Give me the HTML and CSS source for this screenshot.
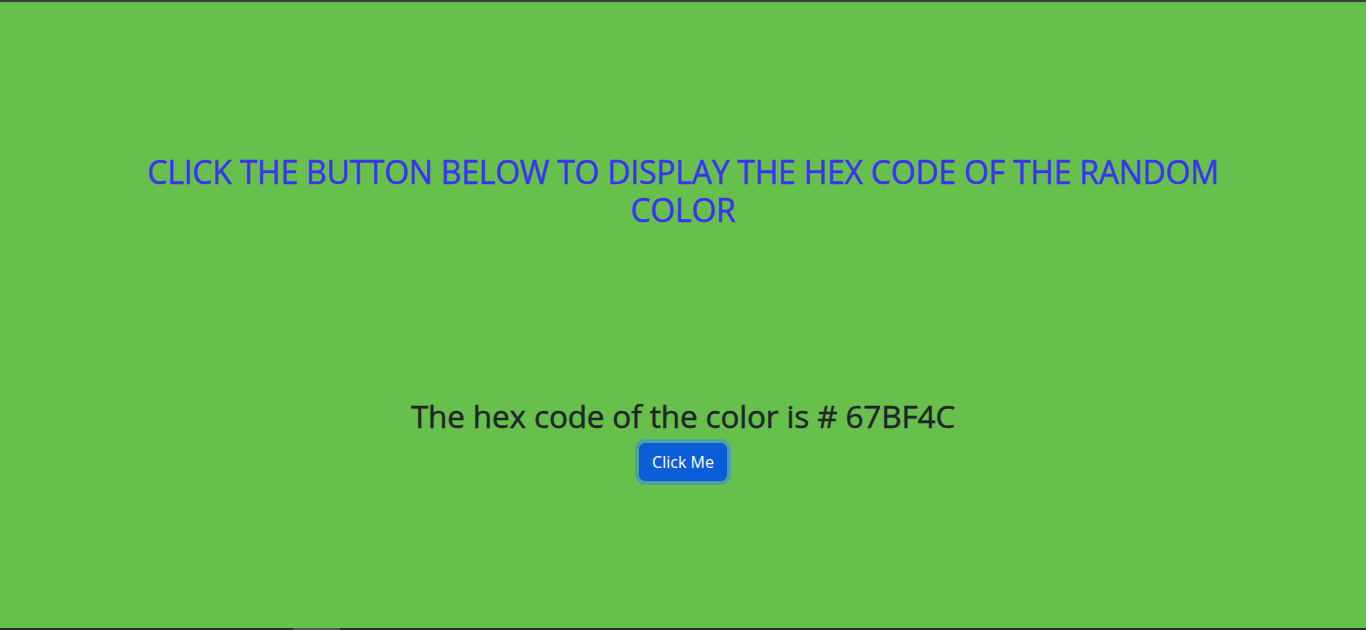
FILE: index.html
```html
<!DOCTYPE html>
<html lang="en">
<head>
<meta charset="utf-8">
<title>Random Color</title>
<link rel="stylesheet" href="styles.css">
</head>
<body>
<div class="top-bar"></div>
<main class="page">
  <h2 class="title">Click the button below to display the hex code of the random color</h2>
  <div class="result">
    <h2 class="hex">The hex code of the color is # 67BF4C</h2>
    <button class="btn" type="button">Click Me</button>
  </div>
</main>
<div class="bottom-bar"><span class="thumb"></span></div>
</body>
</html>
```
FILE: styles.css
```css
html, body {
  margin: 0;
  height: 100%;
}
body {
  display: flex;
  flex-direction: column;
  font-family: "Open Sans", "Noto Sans", sans-serif;
  background: #67bf4c;
  overflow: hidden;
}
.top-bar {
  height: 2px;
  background: #3c3c3c;
  flex: none;
}
.bottom-bar {
  height: 2px;
  background: #2b2b2b;
  flex: none;
  display: flex;
}
.thumb {
  margin-left: 293px;
  width: 47px;
  background: #555;
}
.page {
  flex: 1;
  display: flex;
  flex-direction: column;
  align-items: center;
  padding-top: 151px;
}
.title {
  margin: 0;
  width: 1110px;
  font-size: 32px;
  font-weight: 400;
  line-height: 1.2;
  letter-spacing: -0.25px;
  -webkit-text-stroke: 0.45px currentColor;
  text-transform: uppercase;
  text-align: center;
  color: #3a33f0;
}
.result {
  display: flex;
  flex-direction: column;
  align-items: center;
  margin-top: 167px;
}
.hex {
  margin: 0 0 8px;
  font-size: 31.5px;
  font-weight: 400;
  line-height: 1.2;
  letter-spacing: -0.15px;
  -webkit-text-stroke: 0.45px currentColor;
  color: #212529;
}
.btn {
  font-family: inherit;
  font-size: 16px;
  line-height: 24px;
  padding: 6px 12px;
  border: 1px solid #0a58ca;
  border-radius: 6px;
  background: #0b5ed7;
  color: #fff;
  box-shadow: 0 0 0 4px rgba(49, 132, 253, 0.5);
}
```
